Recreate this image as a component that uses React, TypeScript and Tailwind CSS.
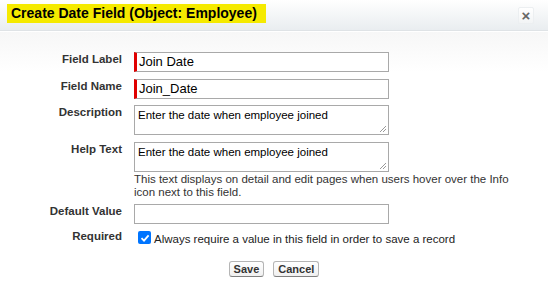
export default function App() {
  const labelCls = "w-[122px] shrink-0 text-right text-[11.5px] leading-[14px] font-bold text-[#333]";
  return (
    <div className="w-[548px] h-[295px] overflow-hidden bg-white font-['Liberation_Sans',Arial,sans-serif] text-[#222]">
      {/* header */}
      <div className="h-[31px] flex items-start justify-between pl-[7px] pr-[14px] pt-[4px] bg-gradient-to-b from-white to-[#e9edf0] border-b border-[#dfe3e6]">
        <div className="h-[19px] w-[259px] whitespace-nowrap bg-[#f5ea00] flex items-center pl-[4px] text-[14px] font-bold text-black">
          Create Date Field (Object: Employee)
        </div>
        <div className="w-[16px] h-[17px] mt-[3px] rounded-[2px] bg-gradient-to-b from-white to-[#f2f4f5] border border-[#eceff1] flex items-center justify-center text-[#666] text-[15px] font-bold leading-none">
          ×
        </div>
      </div>
      <div className="h-[1px] bg-white" />
      {/* body */}
      <div className="bg-gradient-to-b from-[#f7f7f7] to-white to-[40px] pt-[20px]">
        <div className="flex items-start gap-[12px]">
          <div className={labelCls}>Field Label</div>
          <div className="w-[255px] h-[20px] border border-[#a9a9a9] border-l-[3px] border-l-[#e00000] bg-white pl-[2px] text-[13px] leading-[18px] text-black">
            Join Date
          </div>
        </div>
        <div className="flex items-start gap-[12px] mt-[7px]">
          <div className={labelCls}>Field Name</div>
          <div className="w-[255px] h-[20px] border border-[#a9a9a9] border-l-[3px] border-l-[#e00000] bg-white pl-[2px] text-[13px] leading-[18px] text-black">
            Join_Date
          </div>
        </div>
        <div className="flex items-start gap-[12px] mt-[6px]">
          <div className={labelCls}>Description</div>
          <TextBox text="Enter the date when employee joined" />
        </div>
        <div className="flex items-start gap-[12px] mt-[7px]">
          <div className={labelCls}>Help Text</div>
          <div className="flex flex-col">
            <TextBox text="Enter the date when employee joined" />
            <div className="w-[385px] text-[11.5px] leading-[13px] text-[#333] mt-[1px]">
              This text displays on detail and edit pages when users hover over the Info icon next to this field.
            </div>
          </div>
        </div>
        <div className="flex items-start gap-[12px] mt-[5px]">
          <div className={labelCls}>Default Value</div>
          <div className="w-[255px] h-[20px] border border-[#a9a9a9] bg-white" />
        </div>
        <div className="flex items-start gap-[12px] mt-[3px]">
          <div className={`${labelCls} pt-[2px]`}>Required</div>
          <div className="flex items-center gap-[3px] pl-[4px] pt-[2px]">
            <div className="w-[13px] h-[13px] rounded-[2px] bg-[#0075ff] flex items-center justify-center">
              <svg width="10" height="10" viewBox="0 0 10 10">
                <path d="M1.5 5.2 L4 7.6 L8.6 2.4" stroke="white" strokeWidth="1.8" fill="none" />
              </svg>
            </div>
            <span className="text-[11.5px] leading-[14px] mt-[3px] text-[#222]">Always require a value in this field in order to save a record</span>
          </div>
        </div>
        <div className="flex justify-center gap-[9px] mt-[15px]">
          <Btn label="Save" />
          <Btn label="Cancel" />
        </div>
      </div>
    </div>
  );
}

function TextBox({ text }: { text: string }) {
  return (
    <div className="relative w-[255px] h-[30px] border border-[#a9a9a9] bg-white pl-[3px] pt-[2px] text-[11.5px] leading-[14px] text-black">
      {text}
      <svg className="absolute right-[1px] bottom-[1px]" width="8" height="8" viewBox="0 0 8 8">
        <path d="M7 1 L1 7 M7 4 L4 7" stroke="#999" strokeWidth="1" />
      </svg>
    </div>
  );
}

function Btn({ label }: { label: string }) {
  return (
    <div className="h-[16px] px-[4px] rounded-[3px] border border-[#b5b5b5] border-b-[#7f7f7f] bg-gradient-to-b from-white to-[#f0f0f0] text-[11px] leading-[14px] font-bold text-[#333] flex items-center">
      {label}
    </div>
  );
}
